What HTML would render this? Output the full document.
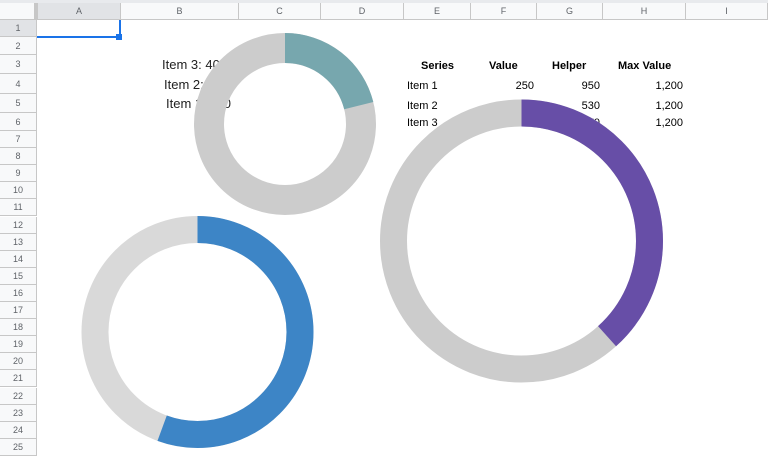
<!DOCTYPE html>
<html><head><style>
body{margin:0;width:768px;height:457px;overflow:hidden;background:#fff;font-family:"Liberation Sans",Arial,sans-serif;position:relative}
.abs{position:absolute}
.ch{position:absolute;top:3px;height:17px;border-right:1px solid #c7c7c7;border-bottom:1px solid #c7c7c7;background:#f8f9fa;font-size:9px;color:#5f6368;text-align:center;line-height:17px;box-sizing:border-box}
.rh{position:absolute;left:0;width:37px;border-right:1px solid #c7c7c7;border-bottom:1px solid #c7c7c7;background:#f8f9fa;font-size:9px;color:#5f6368;text-align:center;box-sizing:border-box}
.t{position:absolute;font-size:11px;color:#000}
.b{font-weight:bold}
.r{text-align:right}
.lg{position:absolute;font-size:13px;color:#222}
</style></head><body>
<div class="abs" style="left:0;top:0;width:768px;height:3px;background:#e8eaed"></div>
<div class="ch" style="left:0;width:38px;background:#f8f9fa;border-right:4px solid #c7c7c7"></div>
<div class="ch" style="left:38px;width:83px;background:#e1e3e6">A</div>
<div class="ch" style="left:121px;width:118px">B</div>
<div class="ch" style="left:239px;width:82px">C</div>
<div class="ch" style="left:321px;width:83px">D</div>
<div class="ch" style="left:404px;width:67px">E</div>
<div class="ch" style="left:471px;width:66px">F</div>
<div class="ch" style="left:537px;width:66px">G</div>
<div class="ch" style="left:603px;width:83px">H</div>
<div class="ch" style="left:686px;width:82px">I</div>
<div id="rows"></div>
<script>
var h=[17,18,19,20,19,18];for(var i=6;i<25;i++)h.push(17.1);
var y=20,s='';for(var i=0;i<25;i++){s+='<div class="rh" style="top:'+y+'px;height:'+h[i]+'px;line-height:'+h[i]+'px;'+(i==0?'background:#e1e3e6;':'')+'">'+(i+1)+'</div>';y+=h[i];}
document.getElementById('rows').innerHTML=s;
</script>
<div class="abs" style="left:37px;top:20px;width:82px;height:16px;border:1px solid #1a73e8;border-width:0 2px 2px 0"></div>
<div class="abs" style="left:116px;top:34px;width:6px;height:6px;background:#1a73e8"></div>

<div class="lg" style="left:162px;top:57px">Item 3: 400</div>
<div class="lg" style="left:164px;top:77px">Item 2: 530</div>
<div class="lg" style="left:166px;top:96px">Item 1: 250</div>

<div class="t b" style="left:421px;top:60px">Series</div>
<div class="t b" style="left:489px;top:60px">Value</div>
<div class="t b" style="left:552px;top:60px">Helper</div>
<div class="t b" style="left:618px;top:60px">Max Value</div>
<div class="t" style="left:407px;top:80px">Item 1</div>
<div class="t r" style="left:470px;width:64px;top:80px">250</div>
<div class="t r" style="left:536px;width:64px;top:80px">950</div>
<div class="t r" style="left:602px;width:81px;top:80px">1,200</div>
<div class="t" style="left:407px;top:100px">Item 2</div>
<div class="t r" style="left:536px;width:64px;top:100px">530</div>
<div class="t r" style="left:602px;width:81px;top:100px">1,200</div>
<div class="t" style="left:407px;top:117px">Item 3</div>
<div class="t r" style="left:536px;width:64px;top:117px">670</div>
<div class="t r" style="left:602px;width:81px;top:117px">1,200</div>

<svg class="abs" style="left:0;top:0" width="768" height="457">
<g transform="translate(285,124) rotate(-90)">
<circle r="76" fill="none" stroke="#cccccc" stroke-width="30"/>
<circle r="76" fill="none" stroke="#77a7ae" stroke-width="30" stroke-dasharray="100.8 1000"/>
</g>
<g transform="translate(197.5,332) rotate(-90)">
<circle r="102.5" fill="none" stroke="#d9d9d9" stroke-width="27"/>
<circle r="102.5" fill="none" stroke="#3d85c6" stroke-width="27" stroke-dasharray="358 1000"/>
</g>
<g transform="translate(521.5,241) rotate(-90)">
<circle r="128" fill="none" stroke="#cccccc" stroke-width="27"/>
<circle r="128" fill="none" stroke="#674ea7" stroke-width="27" stroke-dasharray="308.3 1000"/>
</g>
</svg>
</body></html>
